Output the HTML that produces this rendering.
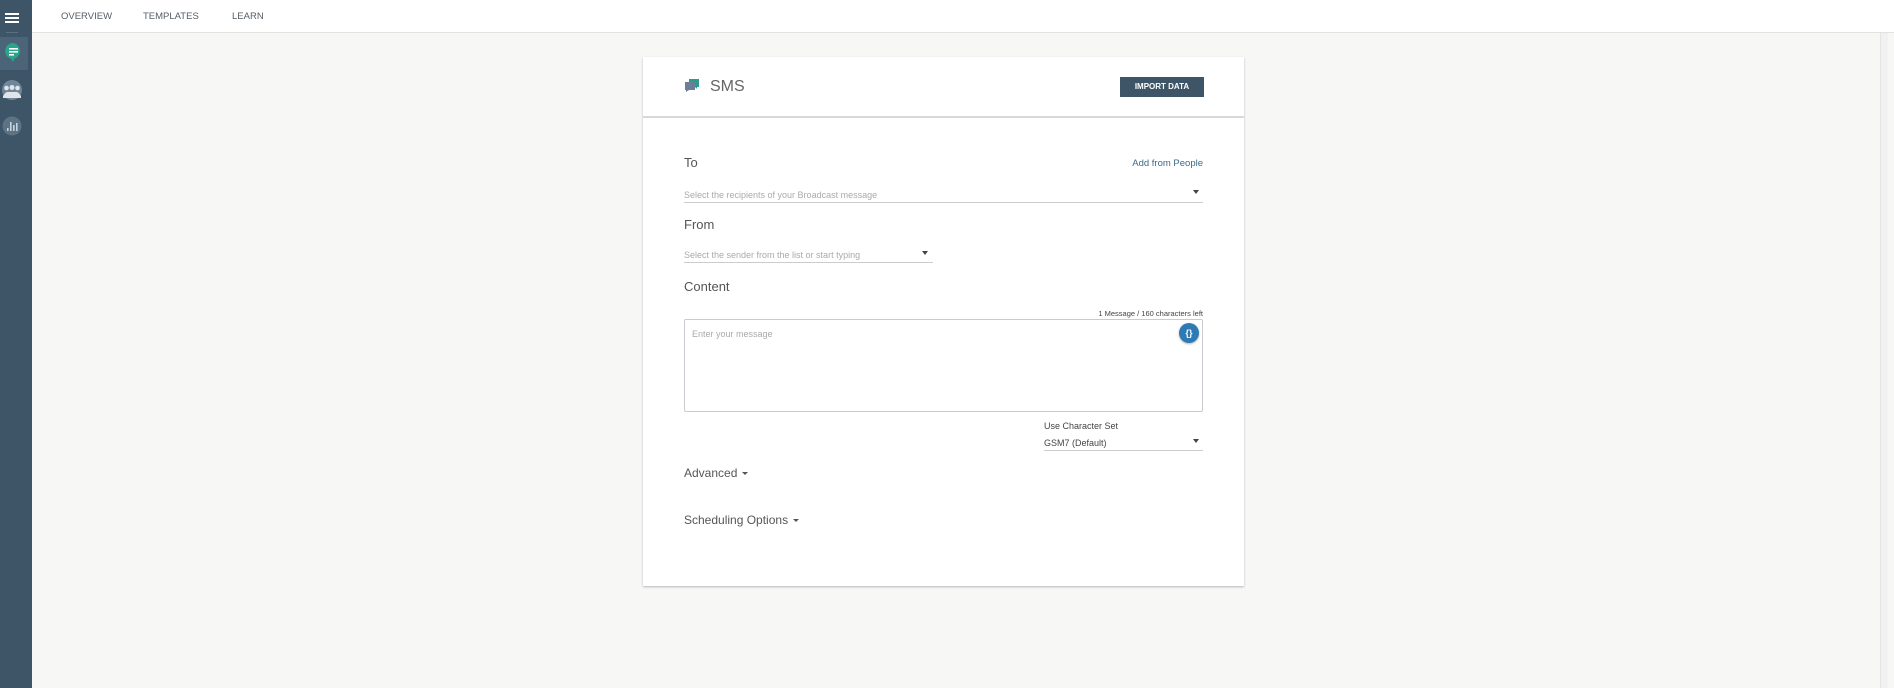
<!DOCTYPE html>
<html><head><style>
*{margin:0;padding:0;box-sizing:border-box}
body{width:1894px;height:688px;overflow:hidden;background:#f7f7f6;font-family:"Liberation Sans",sans-serif;position:relative}
.a{position:absolute}
.t{white-space:nowrap}
.car{display:inline-block;vertical-align:middle;margin-left:5px;border:3px solid transparent;border-top:3.5px solid #555;border-bottom:0}
</style></head><body>
<div class="a" style="left:0;top:0;width:1894px;height:33px;background:#fff;border-bottom:1px solid #e2e2e2"></div>
<div class="a t" style="left:61px;top:11px;font-size:9.5px;color:#555e66">OVERVIEW</div>
<div class="a t" style="left:143px;top:11px;font-size:9.5px;color:#555e66">TEMPLATES</div>
<div class="a t" style="left:232px;top:11px;font-size:9.5px;color:#555e66">LEARN</div>
<div class="a" style="left:0;top:0;width:32px;height:688px;background:#3d5567"></div>
<div class="a" style="left:5px;top:13px;width:14px;height:2px;background:#fff;box-shadow:0 4px 0 #fff,0 8px 0 #fff"></div>
<div class="a" style="left:6px;top:32px;width:12px;height:1px;background:#5b7080"></div>
<div class="a" style="left:0;top:37px;width:28px;height:33px;background:#4b6477"></div>
<svg class="a" style="left:3px;top:42px" width="20" height="22"><path d="M10 1a8 8 0 0 0-2 15.7L10 20l1.5-3.5A8 8 0 0 0 10 1z" fill="#2aa58a"/><rect x="6" y="6" width="9" height="1.6" fill="#fff"/><rect x="6" y="9" width="9" height="1.6" fill="#fff"/><rect x="6" y="12" width="5" height="1.6" fill="#fff"/></svg>
<svg class="a" style="left:1px;top:79px" width="22" height="22"><circle cx="11" cy="11" r="10" fill="#6f8799"/><circle cx="5.5" cy="9" r="2.3" fill="#dfe5ea"/><circle cx="11" cy="8.5" r="2.5" fill="#dfe5ea"/><circle cx="16.5" cy="9" r="2.3" fill="#dfe5ea"/><path d="M2 17q3-5 6-4h6q3-1 6 4v2H2z" fill="#dfe5ea"/></svg>
<svg class="a" style="left:2px;top:116px" width="20" height="20"><circle cx="10" cy="10" r="9.5" fill="#5c7385"/><rect x="5" y="12" width="1.6" height="3" fill="#c9d3da"/><rect x="8" y="6" width="1.6" height="9" fill="#c9d3da"/><rect x="11" y="9" width="1.6" height="6" fill="#c9d3da"/><rect x="14" y="7" width="1.6" height="8" fill="#c9d3da"/></svg>
<div class="a" style="left:1880px;top:33px;width:8px;height:655px;background:#f1f1f1;border-left:1px solid #e4e4e4"></div>
<div class="a" style="left:643px;top:57px;width:601px;height:529px;background:#fff;box-shadow:0 1px 2px rgba(0,0,0,.25)"></div>
<div class="a" style="left:643px;top:116px;width:601px;height:2px;background:#d8d8d8"></div>
<svg class="a" style="left:684px;top:78px" width="18" height="16"><path d="M5 1h10v8h-2v2l-2-2H5z" fill="#2a9d8f"/><path d="M1 4h10v8H5l-3 2v-2H1z" fill="#6c7f96"/></svg>
<div class="a t" style="left:710px;top:78px;font-size:16px;color:#666">SMS</div>
<div class="a t" style="left:1120px;top:77px;width:84px;height:20px;background:#3d5567;color:#fff;font-size:8px;font-weight:bold;line-height:20px;text-align:center">IMPORT DATA</div>
<div class="a t" style="left:684px;top:155px;font-size:13px;color:#555">To</div>
<div class="a t" style="left:1203px;top:158px;transform:translateX(-100%);font-size:9.5px;color:#3c6a85">Add from People</div>
<div class="a t" style="left:684px;top:190px;font-size:9px;color:#aaa">Select the recipients of your Broadcast message</div>
<div class="a" style="left:1193px;top:190px;border:3px solid transparent;border-top:4px solid #444"></div>
<div class="a" style="left:684px;top:202px;width:519px;height:1px;background:#ccc"></div>
<div class="a t" style="left:684px;top:217px;font-size:13px;color:#555">From</div>
<div class="a t" style="left:684px;top:250px;font-size:9px;color:#aaa">Select the sender from the list or start typing</div>
<div class="a" style="left:922px;top:251px;border:3px solid transparent;border-top:4px solid #444"></div>
<div class="a" style="left:684px;top:262px;width:249px;height:1px;background:#ccc"></div>
<div class="a t" style="left:684px;top:279px;font-size:13px;color:#555">Content</div>
<div class="a t" style="left:1203px;top:309px;transform:translateX(-100%);font-size:7.5px;color:#444">1 Message / 160 characters left</div>
<div class="a" style="left:684px;top:319px;width:519px;height:93px;border:1px solid #c8ccd0;border-radius:2px"></div>
<div class="a t" style="left:692px;top:329px;font-size:9px;color:#aaa">Enter your message</div>
<div class="a" style="left:1179px;top:323px;width:20px;height:20px;border-radius:50%;background:#2e7bb4;color:#fff;font-size:9px;font-weight:bold;line-height:20px;text-align:center;box-shadow:0 1px 2px rgba(0,0,0,.3)">{}</div>
<div class="a t" style="left:1044px;top:421px;font-size:9px;color:#444">Use Character Set</div>
<div class="a t" style="left:1044px;top:438px;font-size:9px;color:#444">GSM7 (Default)</div>
<div class="a" style="left:1193px;top:439px;border:3px solid transparent;border-top:4px solid #444"></div>
<div class="a" style="left:1044px;top:450px;width:159px;height:1px;background:#ccc"></div>
<div class="a t" style="left:684px;top:466px;font-size:12px;color:#555">Advanced<span class="car"></span></div>
<div class="a t" style="left:684px;top:513px;font-size:12px;color:#555">Scheduling Options<span class="car"></span></div>
</body></html>
